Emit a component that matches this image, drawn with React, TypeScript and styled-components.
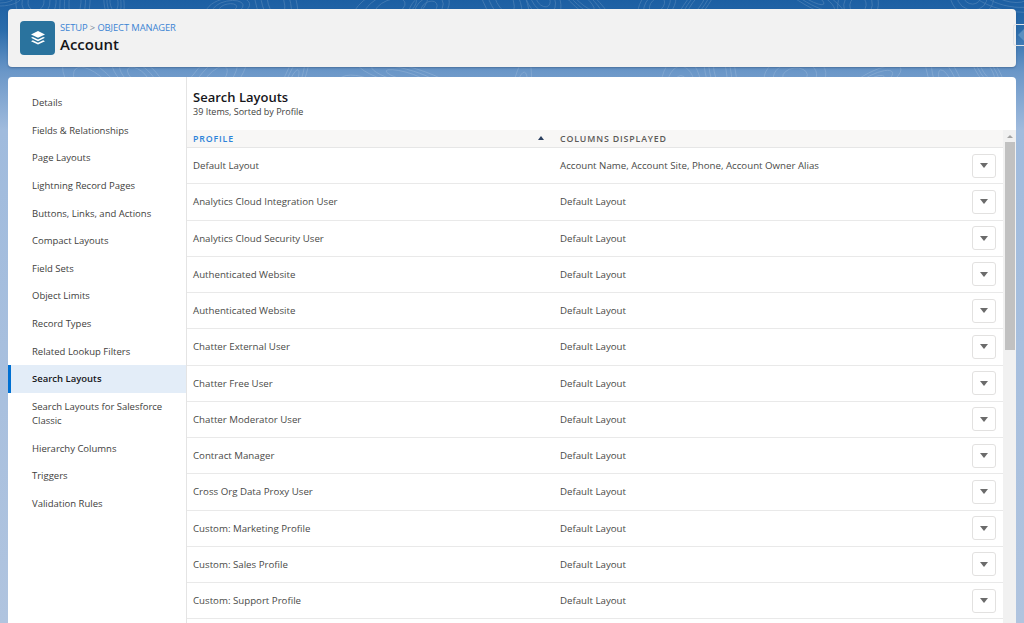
import React from "react";
import styled, { createGlobalStyle } from "styled-components";

const Global = createGlobalStyle`
  html, body { margin: 0; padding: 0; height: 100%; overflow: hidden; }
  body { font-family: "Open Sans", "Liberation Sans", sans-serif; color: #3e3e3c; -webkit-font-smoothing: antialiased; }
`;

const Page = styled.div`
  position: relative;
  width: 1024px;
  height: 623px;
  overflow: hidden;
  box-sizing: border-box;
  padding: 9px 8px 0;
  display: flex;
  flex-direction: column;
  gap: 10px;
  background: linear-gradient(180deg, #1c5fa3 0px, #2a6cab 30px, #6b97c8 72px, #a0bbdd 130px, #b0c4df 623px);
`;

const Contours = styled.svg`
  position: absolute;
  left: 0;
  top: 0;
  width: 1024px;
  height: 150px;
  opacity: 0.17;
  pointer-events: none;
`;

const HeaderCard = styled.header`
  position: relative;
  flex: 0 0 58px;
  box-sizing: border-box;
  display: flex;
  align-items: center;
  gap: 5px;
  padding: 0 12px;
  background: #f2f2f2;
  border-radius: 4px;
  box-shadow: 0 1px 2px rgba(40, 70, 110, 0.45);
`;

const IconTile = styled.div`
  width: 35px;
  height: 34px;
  border-radius: 4px;
  background: #2a739e;
  display: flex;
  align-items: center;
  justify-content: center;
`;

const TitleBlock = styled.div`
  display: flex;
  flex-direction: column;
  margin-top: -2px;
`;

const Crumbs = styled.div`
  font-size: 9.4px;
  line-height: 14px;
  color: #3b84d4;
  letter-spacing: -0.1px;
`;

const Sep = styled.span`
  color: #7a8a9a;
`;

const Title = styled.h1`
  margin: 0;
  font-size: 15px;
  line-height: 18px;
  font-weight: 600;
  color: #16161a;
`;

const Handle = styled.div`
  position: absolute;
  right: 0;
  top: 24px;
  width: 11px;
  height: 22px;
  box-sizing: border-box;
  border: 1px solid #dfe3e8;
  border-right: 0;
  border-radius: 3px 0 0 3px;
  display: flex;
  justify-content: flex-end;
  align-items: center;
`;

const BodyCard = styled.main`
  position: relative;
  flex: 1;
  display: flex;
  background: #fff;
  border-radius: 4px 4px 0 0;
  overflow: hidden;
`;

const Sidebar = styled.nav`
  flex: 0 0 179px;
  box-sizing: border-box;
  padding-top: 12px;
  border-right: 1px solid #e4e4e4;
`;

const NavItem = styled.div<{ $active?: boolean }>`
  box-sizing: border-box;
  padding: 7px 12px 6.65px 21px;
  font-size: 9.5px;
  line-height: 14px;
  color: ${(p) => (p.$active ? "#16161a" : "#3e3e3c")};
  font-weight: ${(p) => (p.$active ? 600 : 400)};
  background: ${(p) => (p.$active ? "#e3edf8" : "transparent")};
  border-left: 3px solid ${(p) => (p.$active ? "#0070d2" : "transparent")};
`;

const Content = styled.section`
  flex: 1;
  min-width: 0;
  display: flex;
  flex-direction: column;
`;

const ContentHead = styled.div`
  flex: 0 0 53px;
  box-sizing: border-box;
  padding: 12px 6px 0;
`;

const ContentTitle = styled.h2`
  margin: 0;
  font-size: 13px;
  line-height: 16px;
  font-weight: 600;
  color: #16161a;
`;

const Sub = styled.div`
  font-size: 9px;
  line-height: 14px;
  color: #3e3e3c;
`;

const TableWrap = styled.div`
  flex: 1;
  display: flex;
  min-height: 0;
`;

const Table = styled.div`
  flex: 1;
  min-width: 0;
`;

const HeadRow = styled.div`
  height: 18px;
  box-sizing: border-box;
  display: grid;
  grid-template-columns: 367px 1fr;
  background: #f8f7f6;
  border-bottom: 1px solid #e6e6e6;
  align-items: center;
`;

const HeadCell = styled.div<{ $sorted?: boolean }>`
  position: relative;
  padding-left: 6px;
  font-size: 8.8px;
  font-weight: 600;
  letter-spacing: 0.85px;
  line-height: 18px;
  color: ${(p) => (p.$sorted ? "#2b82d9" : "#5c5a58")};
`;

const SortCaret = styled.span`
  position: absolute;
  right: 10px;
  top: 6px;
  width: 0;
  height: 0;
  border-left: 3px solid transparent;
  border-right: 3px solid transparent;
  border-bottom: 4px solid #2a3f5f;
`;

const Row = styled.div`
  height: 36.25px;
  box-sizing: border-box;
  display: grid;
  grid-template-columns: 367px 1fr 31px;
  align-items: center;
  border-bottom: 1px solid #e9e9e9;
  font-size: 9.7px;
  color: #4a4a48;
`;

const Cell = styled.div`
  padding-left: 6px;
  white-space: nowrap;
`;

const MenuBtn = styled.div`
  width: 24px;
  height: 24px;
  box-sizing: border-box;
  border: 1px solid #e2e1e0;
  border-radius: 3px;
  background: #fff;
  display: flex;
  align-items: center;
  justify-content: center;
`;

const Caret = styled.span`
  width: 0;
  height: 0;
  border-left: 4px solid transparent;
  border-right: 4px solid transparent;
  border-top: 5px solid #6b6b6b;
`;

const Scrollbar = styled.div`
  flex: 0 0 13px;
  background: #f1f1f1;
  display: flex;
  flex-direction: column;
  align-items: center;
`;

const ScrollArrow = styled.span`
  margin: 5px 0 4px;
  width: 0;
  height: 0;
  border-left: 3px solid transparent;
  border-right: 3px solid transparent;
  border-bottom: 3px solid #a3a3a3;
`;

const ScrollThumb = styled.div`
  width: 10px;
  height: 208px;
  background: #c1c1c1;
`;

const nav = [
  "Details", "Fields & Relationships", "Page Layouts", "Lightning Record Pages",
  "Buttons, Links, and Actions", "Compact Layouts", "Field Sets", "Object Limits",
  "Record Types", "Related Lookup Filters", "Search Layouts",
  "Search Layouts for Salesforce Classic", "Hierarchy Columns", "Triggers", "Validation Rules",
];

const rows = [
  "Analytics Cloud Integration User", "Analytics Cloud Security User", "Authenticated Website",
  "Authenticated Website", "Chatter External User", "Chatter Free User", "Chatter Moderator User",
  "Contract Manager", "Cross Org Data Proxy User", "Custom: Marketing Profile",
  "Custom: Sales Profile", "Custom: Support Profile", "",
];

const blobs = Array.from({ length: 34 }, (_, i) => ({
  cx: (i * 97 + (i % 3) * 41) % 1050,
  cy: i % 2 === 0 ? -4 + (i % 5) * 3 : 70 + (i % 7) * 6,
  rx: 22 + (i % 4) * 9,
  ry: 10 + (i % 3) * 5,
  rot: (i * 37) % 180,
}));

export default function App() {
  return (
    <Page>
      <Global />
      <Contours viewBox="0 0 1024 150" fill="none" stroke="#fff" strokeWidth="0.8">
        {blobs.map((b, i) => (
          <g key={i} transform={`rotate(${b.rot} ${b.cx} ${b.cy})`}>
            <ellipse cx={b.cx} cy={b.cy} rx={b.rx} ry={b.ry} />
            <ellipse cx={b.cx} cy={b.cy} rx={b.rx * 0.7} ry={b.ry * 0.7} />
            <ellipse cx={b.cx} cy={b.cy} rx={b.rx * 0.4} ry={b.ry * 0.4} />
          </g>
        ))}
      </Contours>
      <HeaderCard>
        <IconTile>
          <svg width="16" height="16" viewBox="0 0 16 16" fill="#fff">
            <path d="M8 1 15 4.4 8 7.8 1 4.4z" />
            <path d="M2.8 6.9 8 9.4l5.2-2.5L15 7.8 8 11.2 1 7.8z" />
            <path d="M2.8 10.3 8 12.8l5.2-2.5 1.8.9L8 14.6l-7-3.4z" />
          </svg>
        </IconTile>
        <TitleBlock>
          <Crumbs>SETUP <Sep>&gt;</Sep> OBJECT MANAGER</Crumbs>
          <Title>Account</Title>
        </TitleBlock>
      </HeaderCard>
      <Handle>
        <svg width="7" height="14" viewBox="0 0 7 14" fill="#5a8fc0">
          <path d="M7 1 1 7l6 6z" />
        </svg>
      </Handle>
      <BodyCard>
        <Sidebar>
          {nav.map((n) => <NavItem key={n} $active={n === "Search Layouts"}>{n}</NavItem>)}
        </Sidebar>
        <Content>
          <ContentHead>
            <ContentTitle>Search Layouts</ContentTitle>
            <Sub>39 Items, Sorted by Profile</Sub>
          </ContentHead>
          <TableWrap>
            <Table>
              <HeadRow>
                <HeadCell $sorted>PROFILE<SortCaret /></HeadCell>
                <HeadCell>COLUMNS DISPLAYED</HeadCell>
              </HeadRow>
              <Row>
                <Cell>Default Layout</Cell>
                <Cell>Account Name, Account Site, Phone, Account Owner Alias</Cell>
                <MenuBtn><Caret /></MenuBtn>
              </Row>
              {rows.map((r, i) => (
                <Row key={i}>
                  <Cell>{r}</Cell>
                  <Cell>{r && "Default Layout"}</Cell>
                  {r && <MenuBtn><Caret /></MenuBtn>}
                </Row>
              ))}
            </Table>
            <Scrollbar>
              <ScrollArrow />
              <ScrollThumb />
            </Scrollbar>
          </TableWrap>
        </Content>
      </BodyCard>
    </Page>
  );
}
